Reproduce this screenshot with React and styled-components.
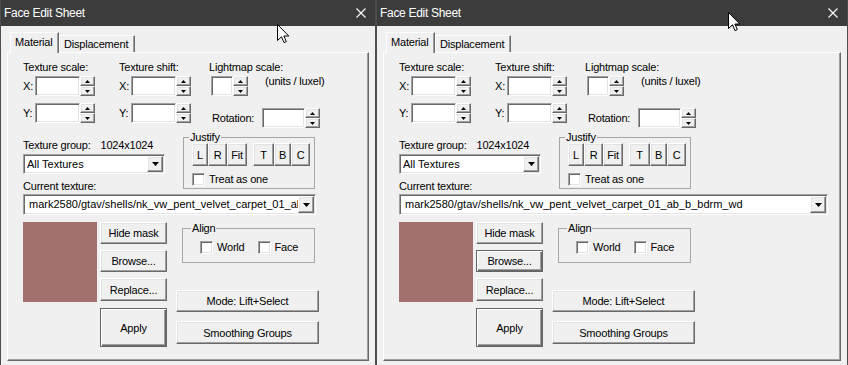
import React from "react";
import styled, { createGlobalStyle, css } from "styled-components";

const GlobalStyle = createGlobalStyle`
  html, body { margin: 0; padding: 0; background: #f0f0f0; }
  body {
    font-family: "Liberation Sans", Arial, sans-serif;
    font-size: 11px;
    letter-spacing: -0.2px;
    color: #000;
  }
`;

// classic 3d edges
const sunken = css`
  border: 1px solid;
  border-color: #a0a0a0 #fff #fff #a0a0a0;
  box-shadow: inset 1px 1px 0 #696969, inset -1px -1px 0 #e3e3e3;
`;

const raised = css`
  border: 1px solid;
  border-color: #fff #696969 #696969 #fff;
  box-shadow: inset -1px -1px 0 #a0a0a0, inset 1px 1px 0 #e3e3e3;
  background: #f0f0f0;
`;

const Desktop = styled.div`
  position: relative;
  display: flex;
  width: 848px;
  height: 365px;
  overflow: hidden;
`;

const Window = styled.div`
  flex: none;
  width: ${(p) => p.$width}px;
  height: 365px;
  box-sizing: border-box;
  border-left: 1px solid #4d4d4d;
  border-right: 1px solid #4d4d4d;
  background: #f0f0f0;
  display: flex;
  flex-direction: column;
`;

const TitleBar = styled.div`
  flex: none;
  height: 26px;
  background: #3c3c3c;
  color: #fff;
  display: flex;
  align-items: center;
  justify-content: space-between;
  padding: 0 9px 0 3px;
  font-size: 12px;
  letter-spacing: -0.3px;
`;

const Body = styled.div`
  flex: 1;
  padding: 6px 6px 0 6px;
`;

const TabStrip = styled.div`
  display: flex;
  align-items: flex-end;
  height: 20px;
  padding-left: 3px;
`;

const Tab = styled.div`
  box-sizing: border-box;
  width: ${(p) => p.$w}px;
  height: ${(p) => (p.$active ? 21 : 17)}px;
  margin-bottom: ${(p) => (p.$active ? -1 : 0)}px;
  position: relative;
  z-index: ${(p) => (p.$active ? 1 : 0)};
  border: 1px solid;
  border-bottom: none;
  border-color: #fff #696969 transparent #fff;
  box-shadow: inset -1px 0 0 #a0a0a0;
  background: #f0f0f0;
  display: flex;
  align-items: ${(p) => (p.$active ? "flex-start" : "center")};
  padding: ${(p) => (p.$active ? "3px 0 0 4px" : "0 0 0 4px")};
  line-height: 13px;
`;

const Panel = styled.div`
  box-sizing: border-box;
  height: 309px;
  border: 1px solid;
  border-color: #fff #696969 #696969 #fff;
  box-shadow: inset -1px -1px 0 #a0a0a0;
  padding: 8px 0 0 15px;
  display: flex;
  flex-direction: column;
`;

const Caption = styled.div`
  line-height: 13px;
  height: 13px;
  white-space: nowrap;
  margin-top: ${(p) => p.$mt || 0}px;
`;

const Size = styled.span`
  margin-left: 10px;
`;

const TopRow = styled.div`
  display: flex;
  align-items: flex-start;
`;

const Column = styled.div`
  flex: none;
  width: ${(p) => (p.$w ? `${p.$w}px` : "auto")};
  margin-left: ${(p) => p.$ml || 0}px;
  display: flex;
  flex-direction: column;
`;

const AxisRow = styled.div`
  display: flex;
  align-items: center;
  margin-top: ${(p) => p.$mt}px;
`;

const Axis = styled.span`
  width: 12px;
  line-height: 13px;
`;

const SpinWrap = styled.div`
  flex: none;
  display: flex;
  width: ${(p) => p.$w}px;
  height: 20px;
  margin-left: ${(p) => p.$ml || 0}px;
`;

const Edit = styled.div`
  ${sunken}
  flex: 1;
  background: #fff;
`;

const Spinner = styled.div`
  width: 15px;
  display: flex;
  flex-direction: column;
`;

const SpinButton = styled.div`
  ${raised}
  flex: 1;
  box-sizing: border-box;
  display: flex;
  align-items: center;
  justify-content: center;
`;

const LightRow = styled.div`
  display: flex;
  align-items: flex-start;
  margin-top: 2px;
`;

const Units = styled.span`
  margin: -1px 0 0 17px;
  line-height: 13px;
  white-space: nowrap;
`;

const RotationRow = styled.div`
  display: flex;
  align-items: center;
  margin-top: 12px;
`;

const RotLabel = styled.span`
  width: 50px;
  padding-left: 3px;
  line-height: 13px;
`;

const MiddleRow = styled.div`
  display: flex;
  align-items: flex-start;
  margin-top: 3px;
`;

const Combo = styled.div`
  ${sunken}
  box-sizing: border-box;
  flex: none;
  width: ${(p) => p.$w}px;
  height: ${(p) => p.$h}px;
  margin-top: ${(p) => p.$mt || 0}px;
  background: #fff;
  display: flex;
  align-items: stretch;
  padding: 1px 1px 1px ${(p) => p.$pl}px;
`;

const ComboText = styled.span`
  flex: 1;
  overflow: hidden;
  white-space: nowrap;
  letter-spacing: 0;
  line-height: ${(p) => p.$h - 4}px;
`;

const ComboArrow = styled.div`
  ${raised}
  box-sizing: border-box;
  width: 16px;
  display: flex;
  align-items: center;
  justify-content: center;
`;

const Group = styled.fieldset`
  flex: none;
  box-sizing: border-box;
  min-width: 0;
  width: ${(p) => p.$w}px;
  margin: 0 0 0 ${(p) => p.$ml || 0}px;
  padding: ${(p) => p.$pt}px 0 ${(p) => p.$pb}px ${(p) => p.$pl}px;
  border: 1px solid #a6a6a6;
`;

const Legend = styled.legend`
  padding: 0 1px;
  margin-left: ${(p) => p.$ml}px;
  line-height: 12px;
`;

const ButtonStrip = styled.div`
  display: flex;
  gap: 6px;
`;

const Segmented = styled.div`
  display: flex;
`;

const PushButton = styled.button`
  ${raised}
  box-sizing: border-box;
  flex: none;
  width: ${(p) => p.$w}px;
  height: ${(p) => p.$h}px;
  margin: ${(p) => p.$mt || 0}px 0 0 0;
  padding: 0;
  font: inherit;
  letter-spacing: inherit;
  color: #000;
  ${(p) =>
    p.$default &&
    css`
      border-color: #646464;
      box-shadow: inset 1px 1px 0 #fff, inset -1px -1px 0 #696969,
        inset -2px -2px 0 #a0a0a0;
    `}
`;

const CheckRow = styled.div`
  display: flex;
  align-items: center;
  height: 13px;
  margin-top: ${(p) => p.$mt || 0}px;
`;

const CheckBox = styled.span`
  ${sunken}
  box-sizing: border-box;
  flex: none;
  width: 13px;
  height: 13px;
  background: #fff;
  margin-left: ${(p) => p.$ml || 0}px;
`;

const CheckText = styled.span`
  margin-left: 4px;
  line-height: 13px;
`;

const BottomRow = styled.div`
  display: flex;
  align-items: flex-start;
  margin-top: 7px;
`;

const Swatch = styled.div`
  flex: none;
  width: 74px;
  height: 80px;
  background: #a2706f;
`;

const Cursor = styled.svg`
  position: absolute;
  left: ${(p) => p.$x}px;
  top: ${(p) => p.$y}px;
  pointer-events: none;
`;

const CloseIcon = () => (
  <svg width="10" height="10" viewBox="0 0 10 10">
    <path d="M0.5 0.5 L9.5 9.5 M9.5 0.5 L0.5 9.5" stroke="#fff" strokeWidth="1.1" />
  </svg>
);

const Tri = ({ dir = "down", w = 5, h = 3 }) => (
  <svg width={w} height={h} viewBox={`0 0 ${w} ${h}`}>
    <path
      d={dir === "up" ? `M0 ${h} L${w / 2} 0 L${w} ${h} Z` : `M0 0 L${w} 0 L${w / 2} ${h} Z`}
      fill="#000"
    />
  </svg>
);

const SpinEdit = ({ w, ml }) => (
  <SpinWrap $w={w} $ml={ml}>
    <Edit />
    <Spinner>
      <SpinButton>
        <Tri dir="up" />
      </SpinButton>
      <SpinButton>
        <Tri dir="down" />
      </SpinButton>
    </Spinner>
  </SpinWrap>
);

const DropDown = ({ w, h, mt, pl = 3, text }) => (
  <Combo $w={w} $h={h} $mt={mt} $pl={pl}>
    <ComboText $h={h}>{text}</ComboText>
    <ComboArrow>
      <Tri w={7} h={4} />
    </ComboArrow>
  </Combo>
);

const ArrowCursor = ({ x, y }) => (
  <Cursor $x={x} $y={y} width="13" height="20" viewBox="0 0 13 20">
    <path
      d="M0.5 0.5 L0.5 16.5 L4.5 12.8 L7 18.6 L9.3 17.6 L6.9 12 L11.8 12 Z"
      fill="#fff"
      stroke="#000"
      strokeWidth="1"
      strokeLinejoin="round"
    />
  </Cursor>
);

const TEXTURE = "mark2580/gtav/shells/nk_vw_pent_velvet_carpet_01_ab_b_bdrm_wd";

const FaceEditSheet = ({ width, comboWidth, browseFocused }) => (
  <Window $width={width}>
    <TitleBar>
      <span>Face Edit Sheet</span>
      <CloseIcon />
    </TitleBar>
    <Body>
      <TabStrip>
        <Tab $active $w={49}>Material</Tab>
        <Tab $w={76}>Displacement</Tab>
      </TabStrip>
      <Panel>
        <TopRow>
          <Column $w={96}>
            <Caption>Texture scale:</Caption>
            <AxisRow $mt={2}>
              <Axis>X:</Axis>
              <SpinEdit w={60} />
            </AxisRow>
            <AxisRow $mt={7}>
              <Axis>Y:</Axis>
              <SpinEdit w={60} />
            </AxisRow>
          </Column>
          <Column $w={90}>
            <Caption>Texture shift:</Caption>
            <AxisRow $mt={2}>
              <Axis>X:</Axis>
              <SpinEdit w={60} />
            </AxisRow>
            <AxisRow $mt={7}>
              <Axis>Y:</Axis>
              <SpinEdit w={60} />
            </AxisRow>
          </Column>
          <Column>
            <Caption>Lightmap scale:</Caption>
            <LightRow>
              <SpinEdit w={37} ml={2} />
              <Units>(units / luxel)</Units>
            </LightRow>
            <RotationRow>
              <RotLabel>Rotation:</RotLabel>
              <SpinEdit w={58} />
            </RotationRow>
          </Column>
        </TopRow>

        <MiddleRow>
          <Column $w={160}>
            <Caption $mt={8}>
              Texture group:<Size>1024x1024</Size>
            </Caption>
            <DropDown w={142} h={20} mt={2} text="All Textures" />
            <Caption $mt={6}>Current texture:</Caption>
          </Column>
          <Group $w={132} $pt={0} $pb={2} $pl={8}>
            <Legend $ml={-3}>Justify</Legend>
            <ButtonStrip>
              <Segmented>
                <PushButton $w={16} $h={23}>L</PushButton>
                <PushButton $w={19} $h={23}>R</PushButton>
                <PushButton $w={20} $h={23}>Fit</PushButton>
              </Segmented>
              <Segmented>
                <PushButton $w={21} $h={23}>T</PushButton>
                <PushButton $w={17} $h={23}>B</PushButton>
                <PushButton $w={19} $h={23}>C</PushButton>
              </Segmented>
            </ButtonStrip>
            <CheckRow $mt={7}>
              <CheckBox />
              <CheckText>Treat as one</CheckText>
            </CheckRow>
          </Group>
        </MiddleRow>

        <DropDown w={comboWidth} h={21} mt={1} pl={5} text={TEXTURE} />

        <BottomRow>
          <Swatch />
          <Column $w={67} $ml={3}>
            <PushButton $w={67} $h={22}>Hide mask</PushButton>
            <PushButton $w={67} $h={22} $mt={6} $default={browseFocused}>
              Browse...
            </PushButton>
            <PushButton $w={67} $h={23} $mt={6}>Replace...</PushButton>
            <PushButton $w={67} $h={39} $mt={7} $default>
              Apply
            </PushButton>
          </Column>
          <Column $w={143} $ml={9}>
            <Group $w={133} $ml={6} $pt={7} $pb={8} $pl={17}>
              <Legend $ml={-9}>Align</Legend>
              <CheckRow>
                <CheckBox />
                <CheckText>World</CheckText>
                <CheckBox $ml={13} />
                <CheckText>Face</CheckText>
              </CheckRow>
            </Group>
            <PushButton $w={143} $h={22} $mt={27}>Mode: Lift+Select</PushButton>
            <PushButton $w={143} $h={23} $mt={9}>Smoothing Groups</PushButton>
          </Column>
        </BottomRow>
      </Panel>
    </Body>
  </Window>
);

export default function App() {
  return (
    <>
      <GlobalStyle />
      <Desktop>
        <FaceEditSheet width={376} comboWidth={293} />
        <FaceEditSheet width={472} comboWidth={429} browseFocused />
        <ArrowCursor x={277} y={24} />
        <ArrowCursor x={728} y={12} />
      </Desktop>
    </>
  );
}
